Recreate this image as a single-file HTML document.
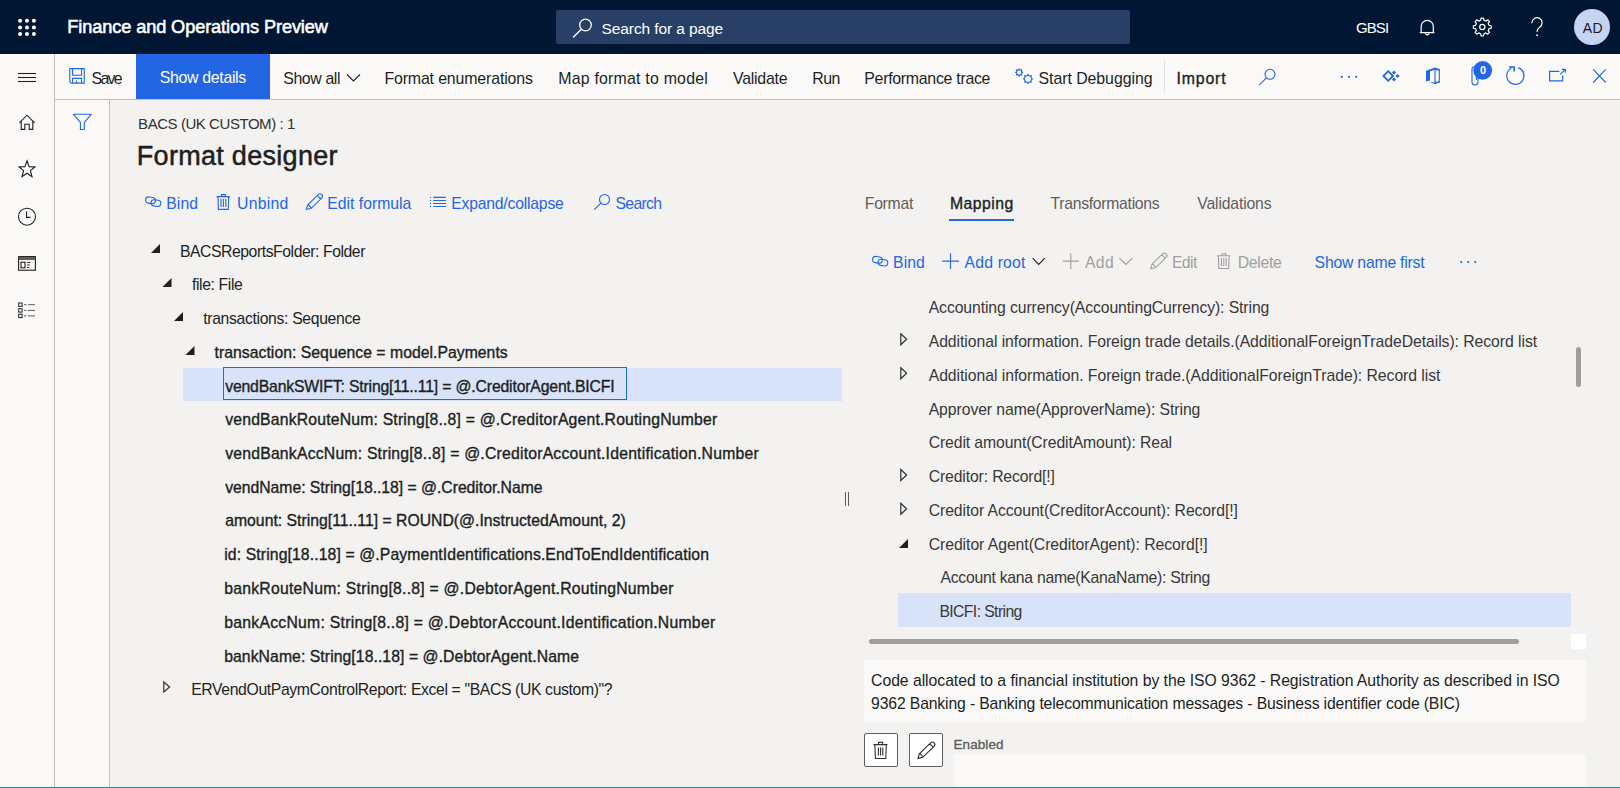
<!DOCTYPE html>
<html><head><meta charset="utf-8">
<style>
html,body{margin:0;padding:0;}
body{width:1620px;height:788px;overflow:hidden;position:relative;background:#f3f2f1;font-family:"Liberation Sans",sans-serif;}
.t{position:absolute;white-space:nowrap;font-family:"Liberation Sans",sans-serif;}
.b{position:absolute;}
svg{position:absolute;overflow:visible;}
</style></head><body>
<!-- header -->
<div class="b" style="left:0;top:0;width:1620px;height:54px;background:#011633"></div>
<svg style="left:0;top:0" width="60" height="54">
 <g fill="#fff"><circle cx="20.1" cy="20.8" r="2"/><circle cx="27" cy="20.8" r="2"/><circle cx="33.9" cy="20.8" r="2"/><circle cx="20.1" cy="27.4" r="2"/><circle cx="27" cy="27.4" r="2"/><circle cx="33.9" cy="27.4" r="2"/><circle cx="20.1" cy="34" r="2"/><circle cx="27" cy="34" r="2"/><circle cx="33.9" cy="34" r="2"/></g>
</svg>
<div class="b" style="left:556px;top:10px;width:574px;height:34px;background:#284066;border-radius:2px"></div>
<svg style="left:560px;top:10px" width="40" height="34">
 <circle cx="25.5" cy="15" r="5.8" fill="none" stroke="#fff" stroke-width="1.3"/>
 <line x1="21.3" y1="19.2" x2="13.5" y2="27" stroke="#fff" stroke-width="1.4" stroke-linecap="round"/>
</svg>
<!-- bell -->
<svg style="left:0;top:0" width="1620" height="54">
 <path d="M1421.2 32.2 L1421.2 26.4 A6.05 6.05 0 0 1 1433.3 26.4 L1433.3 32.2" fill="none" stroke="#fff" stroke-width="1.2"/>
 <path d="M1419.8 32.6 L1434.4 32.6" stroke="#fff" stroke-width="1.3"/>
 <path d="M1425.6 33.2 A1.7 1.7 0 0 0 1429 33.2" fill="none" stroke="#fff" stroke-width="1.2"/>
 <!-- gear -->
 <path d="M1480.63 20.30 L1481.05 18.09 L1483.55 18.09 L1483.97 20.30 L1485.85 21.09 L1487.72 19.81 L1489.49 21.58 L1488.21 23.45 L1489.00 25.33 L1491.21 25.75 L1491.21 28.25 L1489.00 28.67 L1488.21 30.55 L1489.49 32.42 L1487.72 34.19 L1485.85 32.91 L1483.97 33.70 L1483.55 35.91 L1481.05 35.91 L1480.63 33.70 L1478.75 32.91 L1476.88 34.19 L1475.11 32.42 L1476.39 30.55 L1475.60 28.67 L1473.39 28.25 L1473.39 25.75 L1475.60 25.33 L1476.39 23.45 L1475.11 21.58 L1476.88 19.81 L1478.75 21.09 Z" fill="none" stroke="#fff" stroke-width="1.2" stroke-linejoin="round"/>
 <circle cx="1482.3" cy="27" r="2.6" fill="none" stroke="#fff" stroke-width="1.2"/>
 <!-- help -->
 <path d="M1531.9 22.8 A5.1 5.1 0 1 1 1539.6 27.2 C1538 28.3 1537.1 29.2 1537.1 31.6" fill="none" stroke="#fff" stroke-width="1.2" stroke-linecap="round"/>
 <circle cx="1537.1" cy="35.2" r="0.9" fill="#fff"/>
</svg>
<div class="b" style="left:1573.8px;top:9px;width:36px;height:36px;border-radius:50%;background:#c5d4f3"></div>

<!-- command bar -->
<div class="b" style="left:0;top:54px;width:1620px;height:45px;background:#faf9f8"></div>
<div class="b" style="left:55px;top:99px;width:1565px;height:1px;background:#c2c0be"></div>
<div class="b" style="left:136px;top:54px;width:134px;height:45px;background:#2266e3"></div>
<!-- left nav -->
<div class="b" style="left:0;top:99px;width:54px;height:689px;background:#faf9f8"></div>
<div class="b" style="left:54px;top:54px;width:1px;height:734px;background:#c2c0be"></div>
<div class="b" style="left:55px;top:100px;width:54px;height:688px;background:#faf9f8"></div>
<div class="b" style="left:109px;top:100px;width:1px;height:688px;background:#c2c0be"></div>

<!-- selection rows -->
<div class="b" style="left:183px;top:368px;width:659px;height:33px;background:#d8e3fa"></div>
<div class="b" style="left:222.5px;top:367px;width:402px;height:31px;border:1.5px solid #2266e3;box-sizing:content-box"></div>
<div class="b" style="left:898px;top:593px;width:673px;height:34px;background:#d8e3fa"></div>
<!-- tab underline -->
<div class="b" style="left:949px;top:219px;width:65px;height:2px;background:#2266e3"></div>
<!-- scrollbars -->
<div class="b" style="left:1576px;top:347px;width:5px;height:40px;border-radius:3px;background:#a19f9d"></div>
<div class="b" style="left:869px;top:639px;width:650px;height:5px;border-radius:3px;background:#a19f9d"></div>
<div class="b" style="left:1571px;top:634px;width:15px;height:15px;background:#fff"></div>
<!-- splitter -->
<div class="b" style="left:845px;top:492px;width:1px;height:14px;background:#605e5c"></div>
<div class="b" style="left:848px;top:492px;width:1px;height:14px;background:#605e5c"></div>
<!-- description -->
<div class="b" style="left:864px;top:660px;width:722px;height:62px;background:#faf9f8;border-radius:2px"></div>
<div class="b" style="left:864px;top:733px;width:32px;height:32px;background:#fff;border:1px solid #605e5c;border-radius:2px"></div>
<div class="b" style="left:909px;top:733px;width:32px;height:32px;background:#fff;border:1px solid #605e5c;border-radius:2px"></div>
<div class="b" style="left:954px;top:754px;width:632px;height:33px;background:#faf9f8;border-radius:2px"></div>
<!-- tree triangles (filled expanded) -->
<svg style="left:0;top:0" width="1620" height="788">
 <g fill="#201f1e">
  <path d="M151 253 L160 253 L160 244 Z"/>
  <path d="M162.5 287 L171.5 287 L171.5 278 Z"/>
  <path d="M174 321 L183 321 L183 312 Z"/>
  <path d="M185.5 355 L194.5 355 L194.5 346 Z"/>
  <path d="M899 548 L908 548 L908 539 Z"/>
 </g>
 <g fill="none" stroke="#323130" stroke-width="1.2" stroke-linejoin="miter">
  <path d="M163.8 682 L169.6 687 L163.8 692 Z"/>
  <path d="M900.8 333.8 L906.6 339.3 L900.8 344.8 Z"/>
  <path d="M900.8 367.8 L906.6 373.3 L900.8 378.8 Z"/>
  <path d="M900.8 469.5 L906.6 475 L900.8 480.5 Z"/>
  <path d="M900.8 503.3 L906.6 508.8 L900.8 514.3 Z"/>
 </g>
</svg>

<svg style="left:0;top:0" width="1620" height="788">
 <!-- hamburger -->
 <g stroke="#201f1e" stroke-width="1.1">
  <line x1="18" y1="73.5" x2="36" y2="73.5"/><line x1="18" y1="77.5" x2="36" y2="77.5"/><line x1="18" y1="81.5" x2="36" y2="81.5"/>
 </g>
 <!-- save -->
 <g fill="none" stroke="#2266e3" stroke-width="1.1">
  <path d="M69.8 68.6 L84.3 68.6 L84.3 83.1 L71.3 83.1 L69.8 81.6 Z"/>
  <path d="M72.6 68.6 L72.6 75.3 L81.6 75.3 L81.6 68.6"/>
  <path d="M72.6 83.1 L72.6 78.4 L81.6 78.4 L81.6 83.1"/>
  <path d="M76.5 83 L76.5 80.5"/>
 </g>
 <!-- show all chevron -->
 <path d="M347 74.5 L353.5 81 L360 74.5" fill="none" stroke="#201f1e" stroke-width="1.1"/>
 <!-- gears -->
 <g fill="none" stroke="#2266e3" stroke-width="1.05">
  <circle cx="1019.2" cy="72.4" r="2.7"/>
  <circle cx="1028" cy="78.9" r="3.4"/>
 </g>
 <g stroke="#2266e3" stroke-width="1.4">
  <path d="M1019.2 68.4 v1.2 M1019.2 75.2 v1.2 M1015.2 72.4 h1.2 M1022 72.4 h1.2 M1016.4 69.6 l0.9 0.9 M1021.1 74.3 l0.9 0.9 M1016.4 75.2 l0.9 -0.9 M1021.1 70.5 l0.9 -0.9"/>
  <path d="M1028 73.8 v1.5 M1028 82.5 v1.5 M1022.9 78.9 h1.5 M1031.6 78.9 h1.5 M1024.4 75.3 l1.1 1.1 M1030.5 81.4 l1.1 1.1 M1024.4 82.5 l1.1 -1.1 M1030.5 76.4 l1.1 -1.1"/>
 </g>
 <!-- separator -->
 <line x1="1164.5" y1="60" x2="1164.5" y2="92.5" stroke="#e1dfdd" stroke-width="1"/>
 <!-- cmd search -->
 <g fill="none" stroke="#2266e3" stroke-width="1.1">
  <circle cx="1270" cy="74.3" r="5"/>
  <line x1="1266.4" y1="77.9" x2="1259.6" y2="84.6" stroke-linecap="round"/>
 </g>
 <!-- dots -->
 <g fill="#2266e3"><circle cx="1341.8" cy="76.9" r="1.1"/><circle cx="1349" cy="76.9" r="1.1"/><circle cx="1356.2" cy="76.9" r="1.1"/></g>
 <!-- diamond icon -->
 <path d="M1388.2 71.2 L1393 76 L1388.2 80.8 L1383.4 76 Z" fill="none" stroke="#2266e3" stroke-width="1.8"/>
 <g fill="#2266e3">
  <path d="M1394 70.4 L1396.1 72.5 L1394 74.6 L1391.9 72.5 Z"/>
  <path d="M1397.5 73.9 L1399.6 76 L1397.5 78.1 L1395.4 76 Z"/>
  <path d="M1394 77.4 L1396.1 79.5 L1394 81.6 L1391.9 79.5 Z"/>
 </g>
 <!-- office -->
 <g fill="#2266e3">
  <path d="M1426 70.8 L1435 67.4 L1439.8 69.2 L1439.8 70.6 L1435 69.4 L1430 71.4 L1430 80.4 L1426 81.6 Z"/>
  <path d="M1429.6 82 L1435 84.3 L1439.8 82.3 L1439.8 81.2 L1435 82.6 Z"/>
 </g>
 <rect x="1435" y="69.8" width="4.3" height="12.4" fill="none" stroke="#2266e3" stroke-width="1.1"/>
 <!-- paperclip -->
 <path d="M1478 73 L1478 82 A3 3 0 0 1 1472 82 L1472 69 A2.2 2.2 0 0 1 1476.4 69 L1476.4 80" fill="none" stroke="#2266e3" stroke-width="1.1"/>
 <circle cx="1482.7" cy="70.3" r="9.4" fill="#2266e3"/>
 <!-- refresh -->
 <path d="M1518.3 67.6 A8.6 8.6 0 1 1 1511.5 68" fill="none" stroke="#2266e3" stroke-width="1.2"/>
 <path d="M1509 67 L1514.2 67 L1514.2 71.6" fill="none" stroke="#2266e3" stroke-width="1.6"/>
 <!-- open new -->
 <g fill="none" stroke="#2266e3" stroke-width="1.2">
  <path d="M1559.4 71.4 L1549.6 71.4 L1549.6 80.8 L1562.6 80.8 L1562.6 75.6"/>
  <path d="M1560.2 74.4 L1565.3 69.4 M1561.8 69.4 L1565.3 69.4 L1565.3 72.8"/>
 </g>
 <!-- close -->
 <g stroke="#2266e3" stroke-width="1.2"><line x1="1593.2" y1="69.3" x2="1605.7" y2="82.5"/><line x1="1605.7" y1="69.3" x2="1593.2" y2="82.5"/></g>

 <!-- left nav icons -->
 <g fill="none" stroke="#201f1e" stroke-width="1.1">
  <path d="M19.4 122.8 L27 115.2 L34.6 122.8 M21.2 121.2 L21.2 129.4 L24.8 129.4 L24.8 124.2 L29.2 124.2 L29.2 129.4 L32.8 129.4 L32.8 121.2"/>
  <path d="M27 160.8 L29.1 166.6 L35 166.9 L30.4 170.6 L32 176.6 L27 173.2 L22 176.6 L23.6 170.6 L19 166.9 L24.9 166.6 Z"/>
  <circle cx="27" cy="216.7" r="8.5"/>
  <path d="M26.5 211.4 L26.5 217.4 L30.6 217.4"/>
  <rect x="18.6" y="256.6" width="16.8" height="13.6"/>
  <rect x="21" y="262.2" width="4" height="5.6"/>
 </g>
 <rect x="18.6" y="257" width="16.8" height="3" fill="#605e5c"/>
 <g stroke="#201f1e" stroke-width="1"><path d="M27.2 262.5 h3 M27.2 265 h2.5 M27.2 267.5 h2"/></g>
 <g fill="none" stroke="#201f1e" stroke-width="1">
  <rect x="18.7" y="303" width="3.4" height="3.4"/><rect x="18.7" y="308.7" width="3.4" height="3.4"/><rect x="18.7" y="314.2" width="3.4" height="3.4"/>
  <path d="M24 304.7 h2.5 M28 304.7 h7 M24 310.4 h2.5 M28 310.4 h7 M24 315.9 h2.5 M28 315.9 h7" stroke="#605e5c"/>
 </g>
 <!-- filter -->
 <path d="M73.5 114.3 L91.2 114.3 L84.3 122.3 L84.3 129.5 L80.4 129.5 L80.4 122.3 Z" fill="none" stroke="#2266e3" stroke-width="1.1" stroke-linejoin="round"/>

 <!-- left toolbar icons -->
 <g fill="none" stroke="#2266e3" stroke-width="1.1">
  <rect x="145.6" y="197.2" width="9.8" height="6.2" rx="3.1" transform="rotate(8 150.5 200.3)"/>
  <rect x="151" y="200.0" width="9.8" height="6.2" rx="3.1" transform="rotate(8 155.9 203.1)"/>
  <!-- trash -->
  <path d="M216.6 196.6 L229.8 196.6 M221.5 196.4 L221.5 194.6 L225.3 194.6 L225.3 196.4 M218 196.8 L218.4 209.4 L228.3 209.4 L228.7 196.8"/>
  <path d="M221 199 L221 207 M223.4 199 L223.4 207 M225.8 199 L225.8 207"/>
  <!-- pencil -->
  <path d="M306.4 209.4 L307.6 205 L318.2 194.6 Q320.2 193 321.8 194.6 Q323.4 196.3 321.7 198.1 L311 208.6 Z M308 204.6 L311.4 208 M317.4 195.6 L320.8 199"/>
  <!-- search -->
  <circle cx="604.5" cy="199.5" r="5"/>
  <line x1="600.8" y1="203.2" x2="594.6" y2="209.4" stroke-linecap="round"/>
 </g>
 <g stroke="#2266e3" stroke-width="1.1">
  <path d="M433.2 197.4 H445.9 M433.2 200.5 H445.9 M433.2 203.5 H445.9 M433.2 206.5 H445.9"/>
 </g>
 <g fill="#2266e3"><circle cx="430.5" cy="197.4" r="0.7"/><circle cx="430.5" cy="200.5" r="0.7"/><circle cx="430.5" cy="203.5" r="0.7"/><circle cx="430.5" cy="206.5" r="0.7"/></g>
</svg>

<svg style="left:0;top:0" width="1620" height="788">
 <g transform="translate(727,59.5)" fill="none" stroke="#2266e3" stroke-width="1.1">
  <rect x="145.6" y="197.2" width="9.8" height="6.2" rx="3.1" transform="rotate(8 150.5 200.3)"/>
  <rect x="151" y="200.0" width="9.8" height="6.2" rx="3.1" transform="rotate(8 155.9 203.1)"/>
 </g>
 <g stroke="#2266e3" stroke-width="1.1" fill="none">
  <path d="M950.5 253.2 V269 M942.2 261.1 H958.9"/>
 </g>
 <path d="M1032.6 258.2 L1038.7 264.4 L1044.8 258.2" fill="none" stroke="#201f1e" stroke-width="1.1"/>
 <g stroke="#a19f9d" stroke-width="1.1" fill="none">
  <path d="M1070.8 253.2 V269 M1062.8 261.1 H1078.8"/>
  <path d="M1119.4 258.2 L1125.9 264.4 L1132.4 258.2"/>
 </g>
 <g transform="translate(844.4,59.2)" fill="none" stroke="#a19f9d" stroke-width="1.1">
  <path d="M306.4 209.4 L307.6 205 L318.2 194.6 Q320.2 193 321.8 194.6 Q323.4 196.3 321.7 198.1 L311 208.6 Z M308 204.6 L311.4 208 M317.4 195.6 L320.8 199"/>
 </g>
 <g transform="translate(1000.4,59.1)" fill="none" stroke="#a19f9d" stroke-width="1.1">
  <path d="M216.6 196.6 L229.8 196.6 M221.5 196.4 L221.5 194.6 L225.3 194.6 L225.3 196.4 M218 196.8 L218.4 209.4 L228.3 209.4 L228.7 196.8"/>
  <path d="M221 199 L221 207 M223.4 199 L223.4 207 M225.8 199 L225.8 207"/>
 </g>
 <g fill="#2266e3"><circle cx="1461.2" cy="262" r="1.1"/><circle cx="1468.2" cy="262" r="1.1"/><circle cx="1475.2" cy="262" r="1.1"/></g>
 <!-- bottom buttons icons -->
 <g fill="none" stroke="#323130" stroke-width="1.1">
  <path d="M873.4 744.6 L887.4 744.6 M878.5 744.4 L878.5 742.4 L882.7 742.4 L882.7 744.4 M874.9 744.8 L875.4 758.5 L885.8 758.5 L886.3 744.8"/>
  <path d="M878.4 747.6 V755.6 M880.6 747.6 V755.6 M882.8 747.6 V755.6"/>
  <path d="M918 758.4 L919.3 753.8 L930.6 742.8 Q932.6 741.2 934.2 742.8 Q935.8 744.5 934.1 746.3 L922.7 757.3 Z M919.8 753.4 L923.2 756.8 M929.8 743.8 L933.2 747.2"/>
 </g>
</svg>

<!--ICONS3-->
<div class="t" style="left:67.30px;top:17.30px;font-size:18.2px;line-height:20px;color:#ffffff;-webkit-text-stroke:0.55px #ffffff;letter-spacing:-0.111px;">Finance and Operations Preview</div>
<div class="t" style="left:601.60px;top:18.60px;font-size:15.5px;line-height:20px;color:#ffffff;letter-spacing:-0.100px;">Search for a page</div>
<div class="t" style="left:1355.90px;top:18.40px;font-size:15px;line-height:20px;color:#ffffff;letter-spacing:-0.859px;">GBSI</div>
<div class="t" style="left:1582.80px;top:17.80px;font-size:14px;line-height:20px;color:#1b1a19;letter-spacing:0.262px;">AD</div>
<div class="t" style="left:91.60px;top:68.80px;font-size:15.9px;line-height:20px;color:#201f1e;letter-spacing:-1.727px;">Save</div>
<div class="t" style="left:159.80px;top:68.40px;font-size:15.9px;line-height:20px;color:#ffffff;letter-spacing:-0.332px;">Show details</div>
<div class="t" style="left:283.20px;top:68.80px;font-size:15.9px;line-height:20px;color:#201f1e;letter-spacing:-0.390px;">Show all</div>
<div class="t" style="left:384.40px;top:68.80px;font-size:15.9px;line-height:20px;color:#201f1e;letter-spacing:-0.138px;">Format enumerations</div>
<div class="t" style="left:558.20px;top:68.80px;font-size:15.9px;line-height:20px;color:#201f1e;letter-spacing:0.217px;">Map format to model</div>
<div class="t" style="left:733.00px;top:68.80px;font-size:15.9px;line-height:20px;color:#201f1e;letter-spacing:-0.244px;">Validate</div>
<div class="t" style="left:812.30px;top:68.80px;font-size:15.9px;line-height:20px;color:#201f1e;letter-spacing:-0.507px;">Run</div>
<div class="t" style="left:864.30px;top:68.80px;font-size:15.9px;line-height:20px;color:#201f1e;letter-spacing:-0.286px;">Performance trace</div>
<div class="t" style="left:1038.50px;top:68.80px;font-size:15.9px;line-height:20px;color:#201f1e;letter-spacing:-0.057px;">Start Debugging</div>
<div class="t" style="left:1176.40px;top:68.80px;font-size:15.9px;line-height:20px;color:#201f1e;-webkit-text-stroke:0.35px #201f1e;letter-spacing:0.836px;">Import</div>
<div class="t" style="left:138.10px;top:113.80px;font-size:15px;line-height:20px;color:#323130;letter-spacing:-0.444px;">BACS (UK CUSTOM) : 1</div>
<div class="t" style="left:136.80px;top:138.60px;font-size:27px;line-height:34px;color:#201f1e;-webkit-text-stroke:0.5px #201f1e;letter-spacing:0.294px;">Format designer</div>
<div class="t" style="left:166.20px;top:193.60px;font-size:15.75px;line-height:20px;color:#2266e3;letter-spacing:0.112px;">Bind</div>
<div class="t" style="left:237.00px;top:193.60px;font-size:15.75px;line-height:20px;color:#2266e3;letter-spacing:0.270px;">Unbind</div>
<div class="t" style="left:327.30px;top:193.60px;font-size:15.75px;line-height:20px;color:#2266e3;">Edit formula</div>
<div class="t" style="left:451.20px;top:193.60px;font-size:15.75px;line-height:20px;color:#2266e3;letter-spacing:-0.209px;">Expand/collapse</div>
<div class="t" style="left:615.50px;top:193.60px;font-size:15.75px;line-height:20px;color:#2266e3;letter-spacing:-0.669px;">Search</div>
<div class="t" style="left:179.90px;top:242.00px;font-size:15.75px;line-height:20px;color:#201f1e;letter-spacing:-0.439px;">BACSReportsFolder: Folder</div>
<div class="t" style="left:192.00px;top:275.40px;font-size:15.75px;line-height:20px;color:#201f1e;letter-spacing:-0.378px;">file: File</div>
<div class="t" style="left:203.20px;top:309.10px;font-size:15.75px;line-height:20px;color:#201f1e;letter-spacing:-0.336px;">transactions: Sequence</div>
<div class="t" style="left:214.60px;top:343.00px;font-size:15.75px;line-height:20px;color:#201f1e;-webkit-text-stroke:0.35px #201f1e;letter-spacing:0.030px;">transaction: Sequence = model.Payments</div>
<div class="t" style="left:225.20px;top:376.70px;font-size:15.75px;line-height:20px;color:#201f1e;-webkit-text-stroke:0.35px #201f1e;letter-spacing:-0.156px;">vendBankSWIFT: String[11..11] = @.CreditorAgent.BICFI</div>
<div class="t" style="left:225.20px;top:410.40px;font-size:15.75px;line-height:20px;color:#201f1e;-webkit-text-stroke:0.35px #201f1e;letter-spacing:0.189px;">vendBankRouteNum: String[8..8] = @.CreditorAgent.RoutingNumber</div>
<div class="t" style="left:225.20px;top:444.00px;font-size:15.75px;line-height:20px;color:#201f1e;-webkit-text-stroke:0.35px #201f1e;letter-spacing:0.211px;">vendBankAccNum: String[8..8] = @.CreditorAccount.Identification.Number</div>
<div class="t" style="left:225.20px;top:477.70px;font-size:15.75px;line-height:20px;color:#201f1e;-webkit-text-stroke:0.35px #201f1e;letter-spacing:-0.027px;">vendName: String[18..18] = @.Creditor.Name</div>
<div class="t" style="left:225.20px;top:511.30px;font-size:15.75px;line-height:20px;color:#201f1e;-webkit-text-stroke:0.35px #201f1e;letter-spacing:0.010px;">amount: String[11..11] = ROUND(@.InstructedAmount, 2)</div>
<div class="t" style="left:224.20px;top:545.00px;font-size:15.75px;line-height:20px;color:#201f1e;-webkit-text-stroke:0.35px #201f1e;letter-spacing:0.116px;">id: String[18..18] = @.PaymentIdentifications.EndToEndIdentification</div>
<div class="t" style="left:224.20px;top:578.60px;font-size:15.75px;line-height:20px;color:#201f1e;-webkit-text-stroke:0.35px #201f1e;letter-spacing:0.245px;">bankRouteNum: String[8..8] = @.DebtorAgent.RoutingNumber</div>
<div class="t" style="left:224.20px;top:612.90px;font-size:15.75px;line-height:20px;color:#201f1e;-webkit-text-stroke:0.35px #201f1e;letter-spacing:0.265px;">bankAccNum: String[8..8] = @.DebtorAccount.Identification.Number</div>
<div class="t" style="left:224.20px;top:646.50px;font-size:15.75px;line-height:20px;color:#201f1e;-webkit-text-stroke:0.35px #201f1e;letter-spacing:0.069px;">bankName: String[18..18] = @.DebtorAgent.Name</div>
<div class="t" style="left:191.20px;top:679.50px;font-size:15.75px;line-height:20px;color:#201f1e;letter-spacing:-0.366px;">ERVendOutPaymControlReport: Excel = &quot;BACS (UK custom)&quot;?</div>
<div class="t" style="left:864.80px;top:194.00px;font-size:15.75px;line-height:20px;color:#605e5c;letter-spacing:-0.281px;">Format</div>
<div class="t" style="left:950.00px;top:194.00px;font-size:15.75px;line-height:20px;color:#201f1e;-webkit-text-stroke:0.35px #201f1e;letter-spacing:0.474px;">Mapping</div>
<div class="t" style="left:1050.50px;top:194.00px;font-size:15.75px;line-height:20px;color:#605e5c;letter-spacing:-0.288px;">Transformations</div>
<div class="t" style="left:1197.30px;top:194.00px;font-size:15.75px;line-height:20px;color:#605e5c;letter-spacing:-0.161px;">Validations</div>
<div class="t" style="left:893.10px;top:252.60px;font-size:15.75px;line-height:20px;color:#2266e3;letter-spacing:0.045px;">Bind</div>
<div class="t" style="left:964.60px;top:252.60px;font-size:15.75px;line-height:20px;color:#2266e3;letter-spacing:0.177px;">Add root</div>
<div class="t" style="left:1085.00px;top:252.60px;font-size:15.75px;line-height:20px;color:#a19f9d;letter-spacing:0.368px;">Add</div>
<div class="t" style="left:1171.90px;top:252.60px;font-size:15.75px;line-height:20px;color:#a19f9d;letter-spacing:-0.555px;">Edit</div>
<div class="t" style="left:1237.70px;top:252.60px;font-size:15.75px;line-height:20px;color:#a19f9d;letter-spacing:-0.294px;">Delete</div>
<div class="t" style="left:1314.60px;top:252.60px;font-size:15.75px;line-height:20px;color:#2266e3;letter-spacing:-0.203px;">Show name first</div>
<div class="t" style="left:928.70px;top:297.70px;font-size:15.75px;line-height:20px;color:#383736;letter-spacing:-0.092px;">Accounting currency(AccountingCurrency): String</div>
<div class="t" style="left:928.70px;top:331.60px;font-size:15.75px;line-height:20px;color:#383736;letter-spacing:-0.052px;">Additional information. Foreign trade details.(AdditionalForeignTradeDetails): Record list</div>
<div class="t" style="left:928.70px;top:365.60px;font-size:15.75px;line-height:20px;color:#383736;letter-spacing:-0.044px;">Additional information. Foreign trade.(AdditionalForeignTrade): Record list</div>
<div class="t" style="left:928.70px;top:399.50px;font-size:15.75px;line-height:20px;color:#383736;letter-spacing:-0.068px;">Approver name(ApproverName): String</div>
<div class="t" style="left:928.70px;top:433.40px;font-size:15.75px;line-height:20px;color:#383736;letter-spacing:-0.108px;">Credit amount(CreditAmount): Real</div>
<div class="t" style="left:928.70px;top:467.30px;font-size:15.75px;line-height:20px;color:#383736;letter-spacing:-0.133px;">Creditor: Record[!]</div>
<div class="t" style="left:928.70px;top:500.90px;font-size:15.75px;line-height:20px;color:#383736;letter-spacing:-0.077px;">Creditor Account(CreditorAccount): Record[!]</div>
<div class="t" style="left:928.70px;top:535.00px;font-size:15.75px;line-height:20px;color:#383736;letter-spacing:-0.051px;">Creditor Agent(CreditorAgent): Record[!]</div>
<div class="t" style="left:940.40px;top:568.10px;font-size:15.75px;line-height:20px;color:#383736;letter-spacing:-0.251px;">Account kana name(KanaName): String</div>
<div class="t" style="left:939.40px;top:601.60px;font-size:15.75px;line-height:20px;color:#383736;letter-spacing:-0.599px;">BICFI: String</div>
<div class="t" style="left:871.10px;top:670.90px;font-size:15.75px;line-height:20px;color:#201f1e;letter-spacing:-0.038px;">Code allocated to a financial institution by the ISO 9362 - Registration Authority as described in ISO</div>
<div class="t" style="left:871.10px;top:693.70px;font-size:15.75px;line-height:20px;color:#201f1e;letter-spacing:-0.145px;">9362 Banking - Banking telecommunication messages - Business identifier code (BIC)</div>
<div class="t" style="left:1480.00px;top:60.00px;font-size:11px;line-height:20px;color:#ffffff;font-weight:700;">0</div>
<div class="t" style="left:953.50px;top:735.00px;font-size:13.5px;line-height:20px;color:#605e5c;-webkit-text-stroke:0.35px #605e5c;letter-spacing:0.077px;">Enabled</div>
<div class="b" style="left:0;top:787px;width:1620px;height:1px;background:#2f7f98"></div>
</body></html>
